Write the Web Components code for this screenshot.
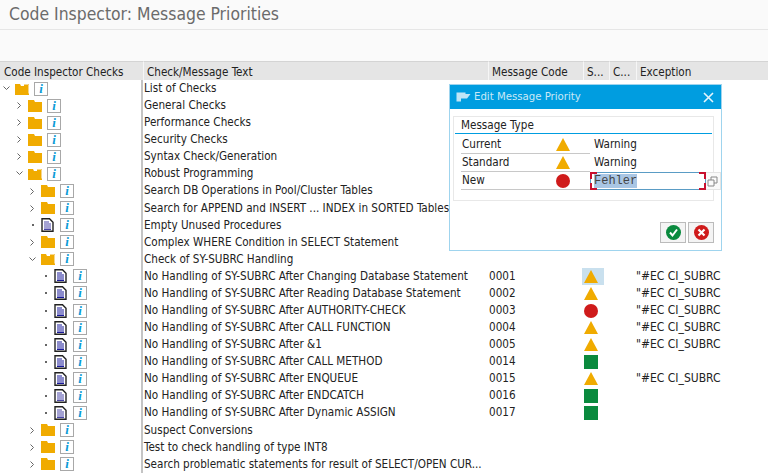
<!DOCTYPE html>
<html>
<head>
<meta charset="utf-8">
<style>
  html, body { margin: 0; height: 100%; overflow: hidden; background: #fff; }
  body { font: 11.6px "DejaVu Sans Condensed", "DejaVu Sans", sans-serif; font-stretch: condensed; color: #222; }
  #page { position: relative; width: 768px; height: 475px; overflow: hidden; }
</style>
</head>
<body>
<div id="page">
  <sap-title>Code Inspector: Message Priorities</sap-title>
  <sap-toolbar></sap-toolbar>
  <sap-tree id="tree"></sap-tree>
  <sap-dialog></sap-dialog>
</div>

<script>
const html = String.raw;

const icons = {
  closed: html`<svg width="14" height="12" viewBox="0 0 14 12"><path d="M0 0h6l1 2h7v10H0z" fill="#f0ab00"/></svg>`,
  open: html`<svg width="14" height="12" viewBox="0 0 14 12"><path d="M0 1h5l1 2h3V1h5v11H0z" fill="#f0ab00"/><path d="M9 1.5h4.5v9" fill="none" stroke="#f6d68c"/></svg>`,
  doc: (c) => html`<svg width="13" height="14" viewBox="0 0 13 14"><path d="M1 .7h7.5l3.5 3.5v9.1H1z" fill="#fff" stroke="#222" stroke-width="1.4"/><path d="M3 4h5M3 6h7M3 8h7M3 10h7M3 11.5h7" stroke="${c}" fill="none" stroke-width="1.2"/></svg>`,
  warn: html`<svg width="14" height="13" viewBox="0 0 14 13"><path d="M7 0l7 13H0z" fill="#f0ab00"/></svg>`,
  err: html`<svg width="14" height="14" viewBox="0 0 14 14"><circle cx="7" cy="7" r="7" fill="#cf1b1b"/></svg>`,
  ok: html`<svg width="14" height="14" viewBox="0 0 14 14"><path d="M0 0h14v14H0z" fill="#0a8a3e"/></svg>`,
};

class SapTitle extends HTMLElement {
  constructor() {
    super();
    this.attachShadow({ mode: 'open' }).innerHTML = html`
      <style>
        :host { display: block; height: 30px; box-sizing: border-box; padding-left: 9px;
          background: #fafafa; border-bottom: 1px solid #e6e6e6;
          font: 17.4px/29px "DejaVu Sans Condensed", "DejaVu Sans", sans-serif; font-stretch: condensed; color: #6b6b6b; }
      </style><slot></slot>`;
  }
}

class SapToolbar extends HTMLElement {
  constructor() {
    super();
    this.attachShadow({ mode: 'open' }).innerHTML = html`
      <style>:host { display: block; height: 31px; background: #fafafa; }</style>`;
  }
}

class SapTree extends HTMLElement {
  constructor() {
    super();
    this.attachShadow({ mode: 'open' });
  }
  connectedCallback() {
    const groups = [
      [0, 'open', 'List of Checks'],
      [1, 'closed', 'General Checks'],
      [1, 'closed', 'Performance Checks'],
      [1, 'closed', 'Security Checks'],
      [1, 'closed', 'Syntax Check/Generation'],
      [1, 'open', 'Robust Programming'],
      [2, 'closed', 'Search DB Operations in Pool/Cluster Tables'],
      [2, 'closed', 'Search for APPEND and INSERT ... INDEX in SORTED Tables'],
      [2, 'doc', 'Empty Unused Procedures'],
      [2, 'closed', 'Complex WHERE Condition in SELECT Statement'],
      [2, 'open', 'Check of SY-SUBRC Handling'],
      [3, 'doc', 'No Handling of SY-SUBRC After Changing Database Statement', '0001', 'warn', 1],
      [3, 'doc', 'No Handling of SY-SUBRC After Reading Database Statement', '0002', 'warn', 1],
      [3, 'doc', 'No Handling of SY-SUBRC After AUTHORITY-CHECK', '0003', 'err', 1],
      [3, 'doc', 'No Handling of SY-SUBRC After CALL FUNCTION', '0004', 'warn', 1],
      [3, 'doc', 'No Handling of SY-SUBRC After &1', '0005', 'warn', 1],
      [3, 'doc', 'No Handling of SY-SUBRC After CALL METHOD', '0014', 'ok', 0],
      [3, 'doc', 'No Handling of SY-SUBRC After ENQUEUE', '0015', 'warn', 1],
      [3, 'doc', 'No Handling of SY-SUBRC After ENDCATCH', '0016', 'ok', 0],
      [3, 'doc', 'No Handling of SY-SUBRC After Dynamic ASSIGN', '0017', 'ok', 0],
      [2, 'closed', 'Suspect Conversions'],
      [2, 'closed', 'Test to check handling of type INT8'],
      [2, 'closed', 'Search problematic statements for result of SELECT/OPEN CUR...'],
    ];
    const rows = groups.map(([lvl, kind, text, code, prio, exc], i) => {
      const isDoc = kind === 'doc';
      const tog = isDoc
        ? '<span class="dot"></span>'
        : kind === 'open'
          ? '<svg width="7" height="5" viewBox="0 0 7 5"><path d="M.5 .5l3 3 3-3" fill="none" stroke="#666"/></svg>'
          : '<svg width="5" height="7" viewBox="0 0 5 7"><path d="M.5 .5l3 3-3 3" fill="none" stroke="#666"/></svg>';
      const docColor = i === 8 || i >= 18 ? '#4a46a8' : '#1a1a9a';
      const ic = isDoc ? icons.doc(docColor) : icons[kind];
      return html`<div class="row">
        <div class="tree" style="padding-left:${lvl * 13 + 2}px">
          <span class="tog">${tog}</span><span class="ic">${ic}</span><span class="info">i</span>
        </div>
        <div class="text">${text.replace('&', '&amp;')}</div>
        <div class="code">${code || ''}</div>
        <div class="prio${i === 11 ? ' sel' : ''}">${prio ? icons[prio] : ''}</div>
        <div class="cc"></div>
        <div class="exc">${exc ? '"#EC CI_SUBRC' : ''}</div>
      </div>`;
    }).join('');
    this.shadowRoot.innerHTML = html`
      <style>
        :host { display: block; font: 11.6px/17px "DejaVu Sans Condensed", "DejaVu Sans", sans-serif; font-stretch: condensed; color: #222; }
        .grid { display: grid; grid-template-columns: 143px 345px 95px 26px 27px 1fr; }
        .head, .row { display: contents; }
        .head > div { background: #e5e5e5; height: 18px; line-height: 20px; padding-left: 3px;
          border-left: 1px solid #f6f6f6; border-top: 1px solid #d4d4d4; white-space: nowrap; overflow: hidden; }
        .head > div:first-child { border-left: 0; padding-left: 4px; }
        .row > div { height: 17.09px; white-space: nowrap; }
        .tree { display: flex; align-items: center; box-sizing: border-box; border-right: 2px solid #c4c4c4; }
        .tog { width: 13px; display: flex; justify-content: center; flex: none; padding-right: 4px; box-sizing: border-box; }
        .dot { width: 2px; height: 2px; background: #666; }
        .ic { width: 19px; display: flex; flex: none; }
        .info { width: 14px; height: 14px; box-sizing: border-box; border: 1px solid #a8a8a8; background: #fff;
          font: italic bold 13px/12px "Liberation Serif", serif; color: #0a9ad6; text-align: center; }
        .text { padding-left: 1px; }
        .code { padding-left: 1px; }
        .prio { display: flex; align-items: center; margin: 0 5px 0 -1px; padding-left: 2px; }
        .prio.sel { background: #c9e0ee; }
        .exc { font-size: 12px; }
      </style>
      <div class="grid">
        <div class="head">
          <div>Code Inspector Checks</div><div>Check/Message Text</div><div>Message Code</div><div>S...</div><div>C...</div><div>Exception</div>
        </div>
        ${rows}
      </div>`;
  }
}

class SapDialog extends HTMLElement {
  constructor() {
    super();
    this.attachShadow({ mode: 'open' }).innerHTML = html`
      <style>
        :host { position: absolute; left: 449px; top: 84px; width: 273px; height: 167px; box-sizing: border-box;
          background: #fff; border: 1px solid #9fd4ee; font: 11.6px/17px "DejaVu Sans Condensed", "DejaVu Sans", sans-serif; font-stretch: condensed; color: #222;
          display: flex; flex-direction: column; }
        .bar { height: 24px; background: #009de0; color: #c9e9f7; display: flex; align-items: center; padding: 0 7px 0 6px; gap: 3px; flex: none; }
        .bar span { flex: 1; font-size: 11.3px; margin-top: -2px; }
        .body { flex: 1; padding: 7px 7px 0 3px; display: flex; flex-direction: column; }
        .panel { border: 1px solid #e8e8e8; height: 85px; box-sizing: border-box; padding: 0 1px; }
        .ph { border-bottom: 1px solid #009de0; padding-left: 6px; height: 16px; line-height: 17px; }
        .list { display: flex; flex-direction: column; margin: 2px 0 0 6px; }
        .item { display: flex; height: 18px; align-items: center; }
        .lab { width: 129px; height: 18px; box-sizing: border-box; border-bottom: 1px solid #c8c8c8; display: flex; justify-content: space-between; align-items: center; padding: 0 20px 0 1px; flex: none; }
        .val { padding: 0 0 2px 4px; }
        .input { position: relative; width: 116px; height: 18px; border: 1px solid #5a9cc5;
          font: 12px/16px "Liberation Mono", monospace; color: #444; padding-left: 3px; box-sizing: border-box; }
        .input b { font-weight: normal; background: #a9c6e4; }
        .input i { position: absolute; width: 5px; height: 5px; border: 0 solid #c8102e; }
        .tl { left: -1px; top: -1px; border-width: 2px 0 0 2px !important; }
        .bl { left: -1px; bottom: -1px; border-width: 0 0 2px 2px !important; }
        .tr { right: -1px; top: -1px; border-width: 2px 2px 0 0 !important; }
        .br { right: -1px; bottom: -1px; border-width: 0 2px 2px 0 !important; }
        .vh { position: absolute; left: 115px; top: -1px; width: 15px; height: 18px; box-sizing: border-box; border: 1px solid #e4e4e4; border-left: 0; background: #fafafa; }
        .btns { margin-top: auto; display: flex; justify-content: flex-end; gap: 2px; padding: 0 0 7px; }
        .btn { width: 26px; height: 21px; box-sizing: border-box; border: 1px solid #bbb; background: #f4f4f4; display: flex; align-items: center; justify-content: center; }
      </style>
      <div class="bar">
        <svg width="15" height="12" viewBox="0 0 15 12"><path d="M.5 1.5h9v1.5h5L11 7.5H5v3H.5z" fill="#bfe5f6"/></svg>
        <span>Edit Message Priority</span>
        <svg width="11" height="11" viewBox="0 0 11 11"><path d="M1 1l9 9M10 1l-9 9" stroke="#e4f5fc" stroke-width="1.6"/></svg>
      </div>
      <div class="body">
        <div class="panel">
          <div class="ph">Message Type</div>
          <div class="list">
            <div class="item"><div class="lab">Current ${icons.warn}</div><div class="val">Warning</div></div>
            <div class="item"><div class="lab">Standard ${icons.warn}</div><div class="val">Warning</div></div>
            <div class="item"><div class="lab">New ${icons.err}</div>
              <div class="input"><b>Fehler</b><i class="tl"></i><i class="bl"></i><i class="tr"></i><i class="br"></i>
                <div class="vh"><svg width="12" height="12" viewBox="0 0 12 12" style="margin:2px 0 0 1px"><path d="M1 5h6v6H1zM4 5V2h6v6H7" fill="none" stroke="#888"/></svg></div>
              </div>
            </div>
          </div>
        </div>
        <div class="btns">
          <div class="btn"><svg width="15" height="15" viewBox="0 0 15 15"><circle cx="7.5" cy="7.5" r="7.5" fill="#0a8a3e"/><path d="M4 7.5l2.5 3L11 4.5" fill="none" stroke="#fff" stroke-width="2"/></svg></div>
          <div class="btn"><svg width="15" height="15" viewBox="0 0 15 15"><circle cx="7.5" cy="7.5" r="7.5" fill="#cf1b1b"/><path d="M4.5 4.5l6 6M10.5 4.5l-6 6" fill="none" stroke="#fff" stroke-width="2.2"/></svg></div>
        </div>
      </div>`;
  }
}

customElements.define('sap-title', SapTitle);
customElements.define('sap-toolbar', SapToolbar);
customElements.define('sap-tree', SapTree);
customElements.define('sap-dialog', SapDialog);
</script>
</body>
</html>
